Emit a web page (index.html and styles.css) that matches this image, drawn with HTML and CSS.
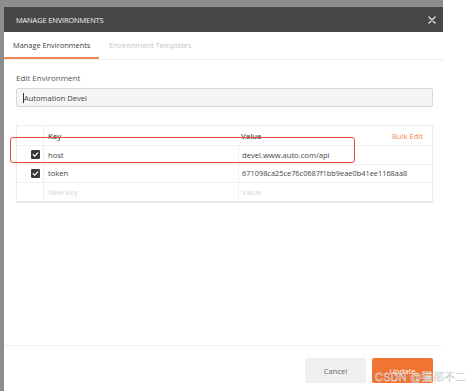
FILE: index.html
```html
<!DOCTYPE html>
<html lang="en">
<head>
  <meta charset="UTF-8" />
  <title>Manage Environments</title>
  <meta name="viewport" content="width=device-width, initial-scale=1.0" />
  <link rel="stylesheet" href="styles.css">
</head>
<body>
  <div class="backdrop">
    <div class="modal">
      <div class="modal-header">
        <span class="modal-title">MANAGE ENVIRONMENTS</span>
        <svg class="close" width="8" height="8" viewBox="0 0 8 8">
          <path d="M1 1L7 7M7 1L1 7" stroke="#e6e6e6" stroke-width="1.3" stroke-linecap="round"/>
        </svg>
      </div>

      <div class="tabs">
        <div class="tab active">Manage Environments</div>
        <div class="tab">Environment Templates</div>
      </div>

      <div class="modal-body">
        <div class="label">Edit Environment</div>
        <div class="input"><span class="caret"></span>Automation Devel</div>

        <div class="table">
          <div class="row head">
            <div class="cell check"></div>
            <div class="cell key">Key</div>
            <div class="cell value">Value <span class="bulk">Bulk Edit</span></div>
          </div>
          <div class="row">
            <div class="cell check">
              <svg width="9" height="9" viewBox="0 0 9 9"><rect width="9" height="9" rx="1.2" fill="#3b3b3b"/><path d="M2.2 4.7L3.8 6.1L6.8 2.9" stroke="#fff" stroke-width="1.2" fill="none" stroke-linecap="round" stroke-linejoin="round"/></svg>
            </div>
            <div class="cell key">host</div>
            <div class="cell value">devel.www.auto.com/api</div>
          </div>
          <div class="row">
            <div class="cell check">
              <svg width="9" height="9" viewBox="0 0 9 9"><rect width="9" height="9" rx="1.2" fill="#3b3b3b"/><path d="M2.2 4.7L3.8 6.1L6.8 2.9" stroke="#fff" stroke-width="1.2" fill="none" stroke-linecap="round" stroke-linejoin="round"/></svg>
            </div>
            <div class="cell key">token</div>
            <div class="cell value token">671098ca25ce76c0687f1bb9eae0b41ee1168aa8</div>
          </div>
          <div class="row placeholder">
            <div class="cell check"></div>
            <div class="cell key">New key</div>
            <div class="cell value">Value</div>
          </div>
          <div class="highlight"></div>
        </div>
      </div>

      <div class="modal-footer">
        <div class="btn cancel">Cancel</div>
        <div class="btn update">Update</div>
      </div>
    </div>
  </div>
  <div class="watermark">CSDN @猫都不二</div>
</body>
</html>
```

FILE: styles.css
```css
body {
  margin: 0;
  background-color: #fff;
  font-family: "Open Sans", "Noto Sans", sans-serif;
  height: 391px;
  overflow: hidden;
  position: relative;
}
.backdrop {
  width: 439px;
  height: 384px;
  padding: 7px 0 0 4px;
  background-color: #8d8d8d;
}
.modal {
  height: 100%;
  background-color: #fff;
  display: flex;
  flex-direction: column;
}
.modal-header {
  height: 25px;
  background-color: #474747;
  display: flex;
  align-items: center;
  justify-content: space-between;
  padding: 0 7px 0 12px;
}
.modal-title {
  color: #f2f2f2;
  font-size: 7.4px;
  letter-spacing: -0.1px;
}
.tabs {
  height: 27px;
  display: flex;
  border-bottom: 1px solid #ececec;
}
.tab {
  padding: 0 9px 0 9px;
  font-size: 7.4px;
  color: #c4c4c4;
  display: flex;
  align-items: center;
  border-bottom: 2px solid transparent;
}
.tab.active {
  color: #3c3c3c;
  border-bottom-color: #ee8a50;
}
.tab + .tab {
  padding-left: 10px;
}
.modal-body {
  flex: 1;
  padding: 0 10px 0 12px;
}
.label {
  margin-top: 12px;
  font-size: 8px;
  color: #555;
}
.input {
  margin-top: 5px;
  height: 17px;
  border: 1px solid #d8d8d8;
  border-radius: 2px;
  background-color: #f5f5f5;
  font-size: 7.5px;
  color: #444;
  display: flex;
  align-items: center;
  padding-left: 6px;
}
.caret {
  width: 1px;
  height: 10px;
  background-color: #333;
}
.table {
  margin-top: 18px;
  border: 1px solid #ececec;
  border-bottom-color: #e2e2e2;
  box-shadow: 0 1px 1px #eee;
  position: relative;
}
.row {
  display: grid;
  grid-template-columns: 26px 195px 1fr;
  height: 18.5px;
  box-sizing: border-box;
  border-top: 1px solid #efefef;
  font-size: 7.6px;
  color: #444;
}
.row.head {
  border-top: none;
  height: 19px;
  color: #555;
  font-weight: 600;
}
.cell {
  display: flex;
  align-items: center;
  border-left: 1px solid #efefef;
  padding-left: 4px;
  white-space: nowrap;
}
.cell.value {
  padding-left: 3px;
}
.cell.token {
  font-size: 7.4px;
}
.cell.check {
  border-left: none;
  justify-content: flex-end;
  padding: 0 3px 0 0;
}
.row.head .cell.value {
  border-left: none;
  padding-left: 3px;
}
.bulk {
  margin-left: auto;
  margin-right: 9px;
  color: #f08a55;
  font-weight: 400;
}
.row.placeholder {
  color: #d4d4d4;
}
.highlight {
  position: absolute;
  left: -7px;
  top: 11px;
  width: 343px;
  height: 24px;
  border: 1.5px solid #e5473a;
  border-radius: 3px;
}
.modal-footer {
  height: 46px;
  border-top: 1px solid #f0f0f0;
  display: flex;
  justify-content: flex-end;
  align-items: flex-start;
  gap: 6px;
  padding: 12px 10px 0 0;
  box-sizing: border-box;
}
.btn {
  width: 61px;
  height: 25px;
  display: flex;
  align-items: center;
  justify-content: center;
  font-size: 7.6px;
  border-radius: 2px;
}
.cancel {
  background-color: #efefef;
  color: #666;
}
.update {
  background-color: #f07432;
  color: #fff;
}
.watermark {
  position: absolute;
  left: 375px;
  top: 372px;
  line-height: 1;
  white-space: nowrap;
  font-size: 11px;
  color: #9a9a9a;
  font-family: "Liberation Sans", "Noto Sans CJK SC", sans-serif;
  -webkit-text-stroke: 0.3px #fff;
  letter-spacing: 0.2px;
}
```
